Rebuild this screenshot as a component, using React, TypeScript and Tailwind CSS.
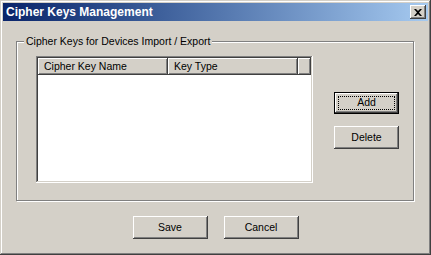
import React from 'react'

const font = { fontFamily: '"Liberation Sans", Arial, sans-serif' }

function Button({ label, focused, className }: { label: string; focused?: boolean; className: string }) {
  return (
    <div
      className={`${className} flex items-center justify-center bg-[#d4d0c8] text-[10.5px] text-black ${
        focused
          ? 'border border-black shadow-[inset_-1px_-1px_#404040,inset_1px_1px_#fff,inset_-2px_-2px_#808080]'
          : 'shadow-[inset_-1px_-1px_#404040,inset_1px_1px_#fff,inset_-2px_-2px_#808080,inset_2px_2px_#d4d0c8]'
      }`}
    >
      {focused ? (
        <div className="flex h-[calc(100%-6px)] w-[calc(100%-6px)] items-center justify-center border border-dotted border-black">
          {label}
        </div>
      ) : (
        label
      )}
    </div>
  )
}

function HeaderCell({ label, className }: { label: string; className: string }) {
  return (
    <div
      className={`${className} flex h-full items-center bg-[#d4d0c8] px-[6px] text-[10.5px] shadow-[inset_-1px_-1px_#404040,inset_1px_1px_#fff,inset_-2px_-2px_#808080]`}
    >
      {label}
    </div>
  )
}

export default function App() {
  return (
    <div
      className="flex h-[255px] w-[431px] flex-col bg-[#d4d0c8] p-[3px] shadow-[inset_-1px_-1px_#404040,inset_1px_1px_#d4d0c8,inset_-2px_-2px_#808080,inset_2px_2px_#fff]"
      style={font}
    >
      {/* title bar */}
      <div className="flex h-[18px] items-center justify-between bg-gradient-to-r from-[#0a246a] to-[#a6caf0] pl-[3px] pr-[2px]">
        <span className="text-[12px] font-bold text-white">Cipher Keys Management</span>
        <div className="flex h-[14px] w-[16px] items-center justify-center bg-[#d4d0c8] shadow-[inset_-1px_-1px_#404040,inset_1px_1px_#fff,inset_-2px_-2px_#808080]">
          <svg width="8" height="7" viewBox="0 0 8 7">
            <path d="M0 0h2l2 2 2-2h2L5 3.5 8 7H6L4 5 2 7H0l3-3.5z" fill="#000" />
          </svg>
        </div>
      </div>

      {/* group box */}
      <div className="relative ml-[13px] mr-[14px] mt-[20px] h-[160px] border border-[#808080] shadow-[1px_1px_#fff,inset_1px_1px_#fff]">
        <span className="absolute left-[7px] top-[-8px] bg-[#d4d0c8] px-[2px] text-[10.5px] leading-[14px] text-black">
          Cipher Keys for Devices Import / Export
        </span>
        <div className="ml-[19px] mt-[14px] flex">
          {/* list view */}
          <div className="flex h-[127px] w-[277px] flex-col bg-white p-[2px] shadow-[inset_-1px_-1px_#fff,inset_1px_1px_#808080,inset_-2px_-2px_#d4d0c8,inset_2px_2px_#404040]">
            <div className="flex h-[17px] text-black">
              <HeaderCell label="Cipher Key Name" className="w-[130px]" />
              <HeaderCell label="Key Type" className="w-[130px]" />
              <HeaderCell label="" className="flex-1" />
            </div>
          </div>
          <div className="ml-[21px] mt-[36px] flex flex-col gap-[12px]">
            <Button label="Add" focused className="h-[22px] w-[65px]" />
            <Button label="Delete" className="h-[23px] w-[65px]" />
          </div>
        </div>
      </div>

      {/* bottom buttons */}
      <div className="mt-[15px] flex justify-center gap-[16px]">
        <Button label="Save" className="h-[23px] w-[75px]" />
        <Button label="Cancel" className="h-[23px] w-[75px]" />
      </div>
    </div>
  )
}
